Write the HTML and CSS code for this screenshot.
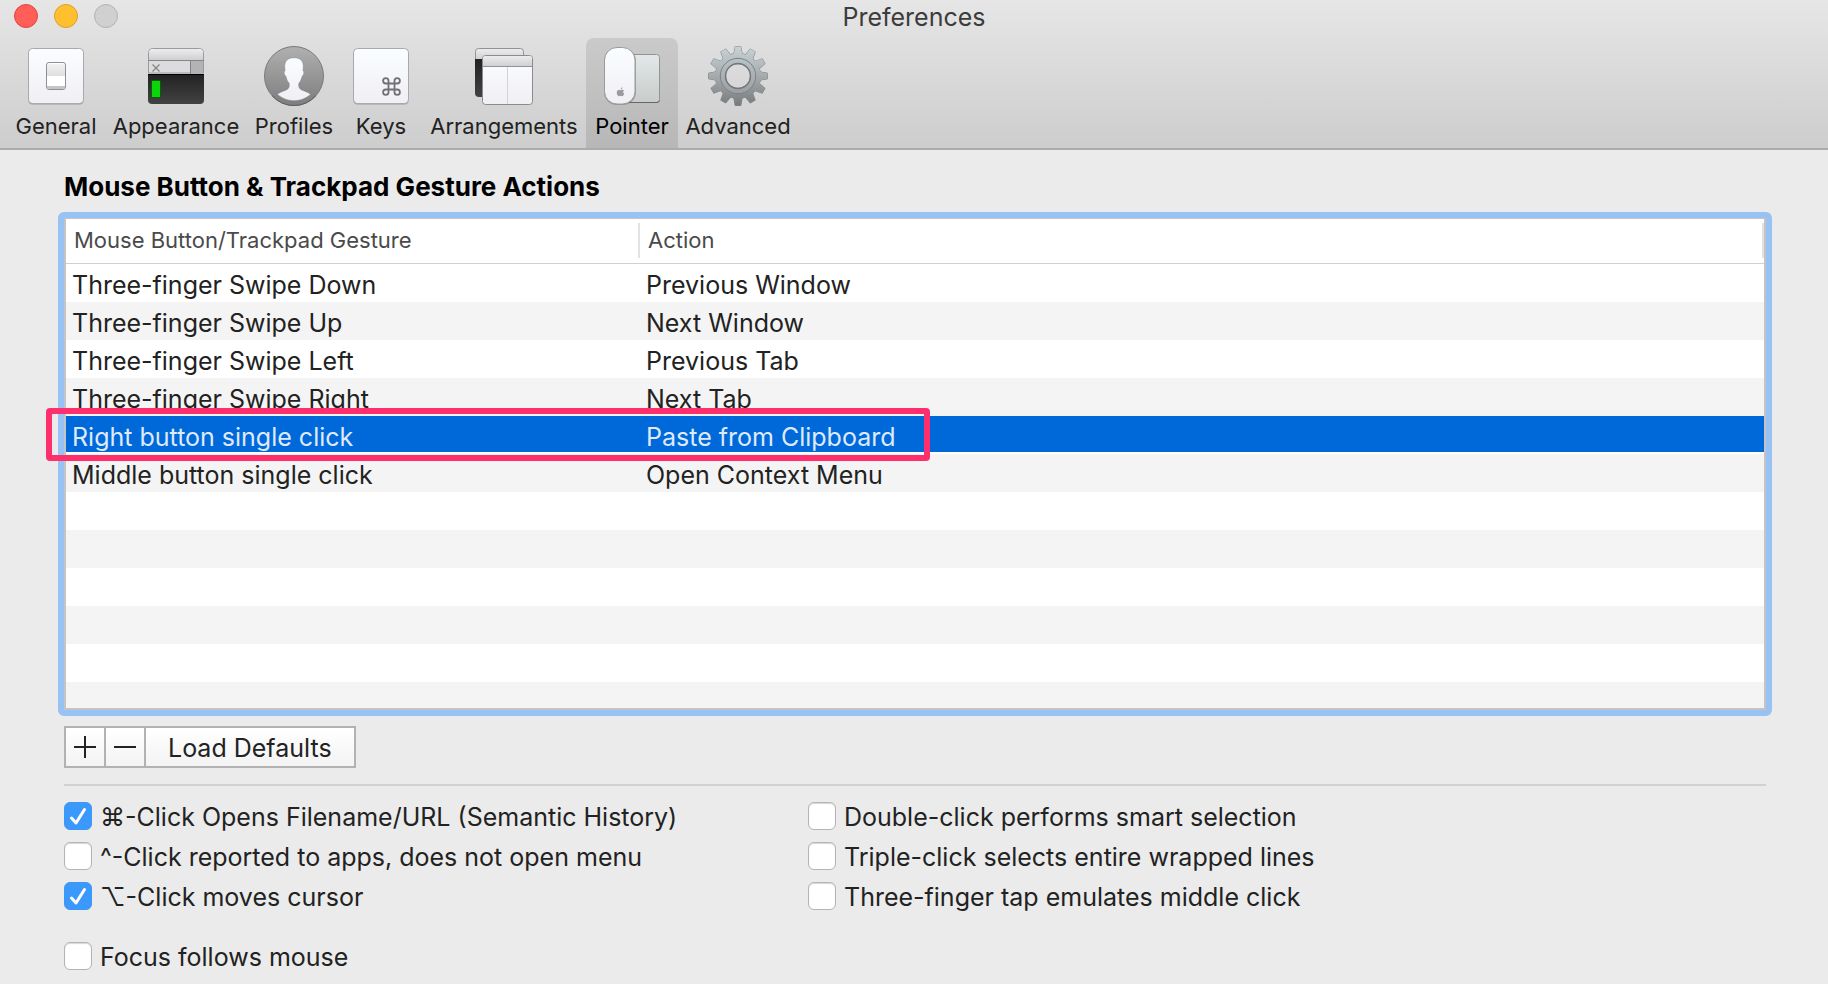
FILE: index.html
```html
<!DOCTYPE html>
<html lang="en">
<head>
<meta charset="utf-8">
<title>Preferences</title>
<link rel="stylesheet" href="styles.css">
</head>
<body>
<svg class="defs" aria-hidden="true">
  <defs>
    <linearGradient id="paper" x1="0" y1="0" x2="0" y2="1"><stop offset="0" stop-color="#fafdff"/><stop offset="1" stop-color="#f0eff4"/></linearGradient>
    <linearGradient id="bar" x1="0" y1="0" x2="0" y2="1"><stop offset="0" stop-color="#ececed"/><stop offset="1" stop-color="#cfd0d2"/></linearGradient>
    <linearGradient id="dark" x1="0" y1="0" x2="0" y2="1"><stop offset="0" stop-color="#222"/><stop offset="1" stop-color="#424242"/></linearGradient>
    <linearGradient id="disc" x1="0" y1="0" x2="0" y2="1"><stop offset="0" stop-color="#b0b0b0"/><stop offset="1" stop-color="#7d7d7f"/></linearGradient>
    <linearGradient id="pad" x1="0" y1="0" x2="0" y2="1"><stop offset="0" stop-color="#e2e9e8"/><stop offset="1" stop-color="#c8cccb"/></linearGradient>
    <linearGradient id="steel" gradientUnits="userSpaceOnUse" x1="0" y1="0" x2="0" y2="60"><stop offset="0" stop-color="#c9d3d7"/><stop offset=".5" stop-color="#a5abad"/><stop offset="1" stop-color="#777a7b"/></linearGradient>
    <linearGradient id="hub" x1="0" y1="0" x2="0" y2="1"><stop offset="0" stop-color="#b6c0c4"/><stop offset="1" stop-color="#9da1a3"/></linearGradient>
  </defs>
</svg>
<header class="toolbar">
  <div class="titlebar">
    <div class="lights">
      <button class="light light-close" aria-label="Close"></button>
      <button class="light light-minimize" aria-label="Minimize"></button>
      <button class="light light-zoom" aria-label="Zoom" disabled></button>
    </div>
    <h1 class="title">Preferences</h1>
  </div>
  <nav class="tabs">
    <button class="tab">
      <svg class="icon" viewBox="0 0 60 60" aria-hidden="true">
        <rect x="2.500" y="3" width="55" height="55.500" rx="4" fill="#858585" opacity=".7"/>
        <rect x="2.500" y="2.500" width="55" height="55" rx="4" fill="url(#paper)" stroke="#a9a9ac"/>
        <rect x="20.500" y="16.500" width="19" height="27" rx="2.500" fill="#fff" stroke="#8f9092"/>
        <path d="M21 18h18v12H21z" fill="url(#bar)" opacity=".7"/>
        <path d="M21 40h18v1.500q0 1.500-2 1.500H23q-2 0-2-1.500z" fill="#c5c5c6"/>
      </svg>
      <span>General</span>
    </button>
    <button class="tab">
      <svg class="icon" viewBox="0 0 60 60" aria-hidden="true">
        <path d="M2.500 27V6.500q0-4 4-4h47q4 0 4 4V27z" fill="#dcdcde" stroke="#9b9b9c"/>
        <path d="M3 14V6.500q0-3.500 3.500-3.500h47q3.500 0 3.500 3.500V14z" fill="url(#bar)"/>
        <path d="M44 15h13v13H44z" fill="#b3b3b5"/>
        <path d="M2 14.500h56M44.500 15v13" stroke="#858586" fill="none"/>
        <path d="M6.500 18.500l7 7m0-7l-7 7" stroke="#858588" stroke-width="1.300"/>
        <path d="M2 28h56v26q0 4-4 4H6q-4 0-4-4z" fill="url(#dark)"/>
        <path d="M2 28.500h56" stroke="#000"/>
        <rect x="5" y="34" width="10" height="18" rx="1.500" fill="#075f07"/>
        <rect x="6" y="35" width="8" height="16" fill="#0bd40b"/>
      </svg>
      <span>Appearance</span>
    </button>
    <button class="tab">
      <svg class="icon" viewBox="0 0 60 60" aria-hidden="true">
        <circle cx="30" cy="30" r="29.500" fill="url(#disc)" stroke="#7a7a7b"/>
        <path d="M8 49.500a29 29 0 0 0 44 0" fill="none" stroke="#5e5e60"/>
        <path d="M30 11.800c6-.4 9.800 3.400 9.300 9.200-.1 1.500-.2 2.600-.3 3.800 1.400.2 1 4.600-1 5.600-.6 3-1.700 5.300-3.200 6.900-.3 3.700.3 5.500 3 6.700 3.300 1.400 6.700 2.400 8.800 4.300-4.600 4-10 6.400-16.600 6.400S18 52.300 13.400 48.300c2.100-1.900 5.500-2.900 8.800-4.300 2.700-1.200 3.300-3 3-6.700-1.500-1.600-2.600-3.900-3.200-6.900-2-1-2.400-5.400-1-5.600-.1-1.200-.2-2.300-.3-3.800-.3-5.600 3.300-9.600 9.300-9.200z" fill="url(#paper)" stroke="#818183" stroke-width=".5"/>
      </svg>
      <span>Profiles</span>
    </button>
    <button class="tab">
      <svg class="icon" viewBox="0 0 60 60" aria-hidden="true">
        <rect x="2.500" y="3" width="55" height="55.500" rx="4" fill="#858585" opacity=".7"/>
        <rect x="2.500" y="2.500" width="55" height="55" rx="4" fill="url(#paper)" stroke="#a9a9ac"/>
        <path d="M37.500 37.500h6v6h-6zM37.500 37.500h-2.700a2.700 2.700 0 1 1 2.700-2.700zM43.500 37.500v-2.700a2.700 2.700 0 1 1 2.700 2.700zM43.500 43.500h2.700a2.700 2.700 0 1 1-2.700 2.700zM37.500 43.500v2.700a2.700 2.700 0 1 1-2.700-2.700z" fill="none" stroke="#717175" stroke-width="1.800"/>
      </svg>
      <span>Keys</span>
    </button>
    <button class="tab">
      <svg class="icon" viewBox="0 0 60 60" aria-hidden="true">
        <path d="M1.500 14V5.500q0-3 3-3h42q3 0 3 3V14z" fill="url(#bar)" stroke="#929293"/>
        <path d="M1 13h10v38H5q-4 0-4-4z" fill="url(#dark)"/>
        <rect x="8.500" y="9.500" width="50" height="49" rx="3" fill="url(#paper)" stroke="#8b8b8d"/>
        <path d="M9 20v-7.500q0-2.500 2.500-2.500h44q2.500 0 2.500 2.500V20z" fill="url(#bar)"/>
        <path d="M9 20.500h49" stroke="#929294"/>
        <path d="M33.500 21v37" stroke="#d3d4d8"/>
      </svg>
      <span>Arrangements</span>
    </button>
    <button class="tab tab-selected" aria-current="page">
      <svg class="icon" viewBox="0 0 60 60" aria-hidden="true">
        <rect x="22" y="8.500" width="35.500" height="48" rx="3" fill="url(#pad)" stroke="#939494"/>
        <path d="M22 56.500h33q2 0 2.500-2" fill="none" stroke="#666" />
        <rect x="2" y="2" width="32" height="57" rx="13" fill="#777" opacity=".55"/>
        <rect x="2.500" y="1.500" width="30.500" height="56.500" rx="12.500" fill="url(#paper)" stroke="#999a9c"/>
        <g transform="translate(4 9) scale(.8)">
          <path d="M18.300 43c.2-1.500 1-2.300 2.200-2.600.1 1.400-.8 2.500-2.200 2.600zM18.200 44c.8 0 1.300-.5 2.300-.5.8 0 1.500.4 2 1-1.600 1-1.400 3.300.3 4-.5 1.400-1.400 3-2.500 3-.8 0-1.100-.5-2-.5s-1.300.5-2 .5c-1.600 0-3.300-3.500-2.700-5.700.5-2 2.200-2.600 4.600-1.800z" fill="#9b9b9e"/>
        </g>
      </svg>
      <span>Pointer</span>
    </button>
    <button class="tab">
      <svg class="icon" viewBox="0 0 60 60" aria-hidden="true">
        <defs>
          <path id="tooth" d="M25.500 10L27.200.500h5.600L34.500 10z"/>
          <clipPath id="teeth">
            <use href="#tooth"/><use href="#tooth" transform="rotate(30 30 30)"/><use href="#tooth" transform="rotate(60 30 30)"/><use href="#tooth" transform="rotate(90 30 30)"/><use href="#tooth" transform="rotate(120 30 30)"/><use href="#tooth" transform="rotate(150 30 30)"/><use href="#tooth" transform="rotate(180 30 30)"/><use href="#tooth" transform="rotate(210 30 30)"/><use href="#tooth" transform="rotate(240 30 30)"/><use href="#tooth" transform="rotate(270 30 30)"/><use href="#tooth" transform="rotate(300 30 30)"/><use href="#tooth" transform="rotate(330 30 30)"/>
          </clipPath>
        </defs>
        <g fill="none" stroke="#7f8588" stroke-width="1">
          <use href="#tooth"/><use href="#tooth" transform="rotate(30 30 30)"/><use href="#tooth" transform="rotate(60 30 30)"/><use href="#tooth" transform="rotate(90 30 30)"/><use href="#tooth" transform="rotate(120 30 30)"/><use href="#tooth" transform="rotate(150 30 30)"/><use href="#tooth" transform="rotate(180 30 30)"/><use href="#tooth" transform="rotate(210 30 30)"/><use href="#tooth" transform="rotate(240 30 30)"/><use href="#tooth" transform="rotate(270 30 30)"/><use href="#tooth" transform="rotate(300 30 30)"/><use href="#tooth" transform="rotate(330 30 30)"/>
        </g>
        <circle cx="30" cy="30" r="17.500" fill="none" stroke="#7f8588" stroke-width="11.300"/>
        <rect width="60" height="60" fill="url(#steel)" clip-path="url(#teeth)"/>
        <circle cx="30" cy="30" r="17.500" fill="none" stroke="url(#steel)" stroke-width="10.500"/>
        <circle cx="30" cy="30" r="15.200" fill="none" stroke="url(#hub)" stroke-width="5"/>
        <circle cx="30" cy="30" r="17.700" fill="none" stroke="#7b8286"/>
        <circle cx="30" cy="30" r="12.500" fill="none" stroke="#72777a" stroke-width="1.400"/>
      </svg>
      <span>Advanced</span>
    </button>
  </nav>
</header>
<main class="pane">
  <h2 class="heading">Mouse Button &amp; Trackpad Gesture Actions</h2>
  <section class="list">
    <div class="list-view">
      <table class="actions">
        <thead>
          <tr><th scope="col"><span class="head">Mouse Button/Trackpad Gesture</span></th><th scope="col"><span class="head">Action</span></th></tr>
        </thead>
        <tbody>
          <tr><td>Three-finger Swipe Down</td><td>Previous Window</td></tr>
          <tr><td>Three-finger Swipe Up</td><td>Next Window</td></tr>
          <tr><td>Three-finger Swipe Left</td><td>Previous Tab</td></tr>
          <tr><td>Three-finger Swipe Right</td><td>Next Tab</td></tr>
          <tr class="row-selected"><td>Right button single click</td><td>Paste from Clipboard</td></tr>
          <tr><td>Middle button single click</td><td>Open Context Menu</td></tr>
        </tbody>
      </table>
      <div class="stripes"></div>
    </div>
    <div class="callout"></div>
  </section>
  <div class="controls">
    <button class="control control-icon" aria-label="Add"><svg class="glyph" viewBox="0 0 22 22" aria-hidden="true"><path d="M0 11h22M11 0v22"/></svg></button>
    <button class="control control-icon" aria-label="Remove"><svg class="glyph" viewBox="0 0 22 22" aria-hidden="true"><path d="M0 11h22"/></svg></button>
    <button class="control control-text">Load Defaults</button>
  </div>
  <hr class="rule">
  <div class="options">
    <div class="column">
      <label class="option"><input type="checkbox" class="check" checked><span>⌘-Click Opens Filename/URL (Semantic History)</span></label>
      <label class="option"><input type="checkbox" class="check"><span>^-Click reported to apps, does not open menu</span></label>
      <label class="option"><input type="checkbox" class="check" checked><span>⌥-Click moves cursor</span></label>
      <label class="option option-apart"><input type="checkbox" class="check"><span>Focus follows mouse</span></label>
    </div>
    <div class="column">
      <label class="option"><input type="checkbox" class="check"><span>Double-click performs smart selection</span></label>
      <label class="option"><input type="checkbox" class="check"><span>Triple-click selects entire wrapped lines</span></label>
      <label class="option"><input type="checkbox" class="check"><span>Three-finger tap emulates middle click</span></label>
    </div>
  </div>
</main>
</body>
</html>
```
FILE: styles.css
```css
* { box-sizing: border-box; }

body {
  margin: 0;
  height: 100vh;
  display: flex;
  flex-direction: column;
  background: #ebebeb;
  color: #222;
  font-family: Inter, "Liberation Sans", sans-serif;
  font-size: 25px;
  line-height: 28px;
}

button {
  margin: 0;
  padding: 0;
  border: 0;
  background: none;
  color: inherit;
  font: inherit;
}

.defs { position: absolute; width: 0; height: 0; }

.toolbar {
  border-bottom: 2px solid #ababab;
  background: linear-gradient(#e6e6e6, #cdcdcd);
}

.titlebar {
  display: grid;
  grid-template-columns: 1fr auto 1fr;
  align-items: center;
  height: 38px;
  padding: 0 14px 6px;
}

.lights { display: flex; gap: 16px; }

.light {
  width: 24px;
  height: 24px;
  border: 1px solid #e2433f;
  border-radius: 50%;
  background: #ff5f58;
}

.light-minimize { border-color: #dfa023; background: #ffbf2f; }
.light-zoom { border-color: #b3b3b3; background: #d0d0d0; }

.title {
  margin: 0;
  padding-top: 2px;
  color: #3c3c3c;
  font-size: 25px;
  font-weight: 400;
}

.tabs {
  display: grid;
  grid-template-columns: 96px 144px 92px 82px 164px 92px 120px;
  height: 110px;
  padding-left: 8px;
}

.tab {
  display: flex;
  flex-direction: column;
  align-items: center;
  padding-top: 8px;
  border-radius: 8px 8px 0 0;
  font-size: 22px;
  line-height: 40px;
}

.tab-selected { background: linear-gradient(#cacaca, #b7b7b7); color: #000; }

.icon { flex: none; width: 60px; height: 60px; }

.pane {
  flex: 1;
  min-height: 0;
  display: flex;
  flex-direction: column;
  padding: 22px 62px 14px 64px;
}

.heading {
  margin: 0 0 10px;
  color: #000;
  font-size: 26px;
  font-weight: 700;
  line-height: 30px;
}

.list {
  position: relative;
  flex: 1;
  min-height: 0;
  display: flex;
  margin: 0 -6px 10px;
  border: 6px solid #98c1f4;
  border-radius: 6px;
}

.list-view {
  flex: 1;
  display: flex;
  flex-direction: column;
  overflow: hidden;
  border: 2px solid #c4c4c4;
  border-top-width: 1px;
  background: #fff;
}

.actions {
  width: 100%;
  table-layout: fixed;
  border-spacing: 0;
}

th, td { text-align: left; white-space: nowrap; }

th:first-child { width: 574px; }

th {
  height: 45px;
  padding: 0 0 2px;
  border-bottom: 1px solid #d0d0d0;
  color: #4a4a4a;
  font-size: 22px;
  font-weight: 400;
}

.head {
  display: block;
  padding-left: 8px;
  border-right: 2px solid #e2e2e2;
  line-height: 35px;
}

td { height: 38px; padding: 3px 6px 0; }

tbody tr:nth-child(even) { background: #f4f4f4; }

.actions .row-selected {
  background: linear-gradient(#0069d9 36px, #fff 36px);
  color: #dfe9fb;
}

.stripes {
  flex: 1;
  background: repeating-linear-gradient(#fff 0 38px, #f4f4f4 38px 76px);
}

.callout {
  position: absolute;
  top: 190px;
  left: -18px;
  width: 884px;
  height: 53px;
  border: 6px solid #ff2e6d;
  border-radius: 4px;
}

.controls { display: flex; }

.control {
  display: flex;
  align-items: center;
  justify-content: center;
  height: 42px;
  border: 2px solid #b2b2b2;
  background: linear-gradient(#fff, #f3f3f3);
}

.control-icon { width: 42px; margin-right: -2px; }
.control-text { padding: 2px 22px 0; }

.glyph { width: 22px; height: 22px; stroke: #222; stroke-width: 2; }

.rule {
  width: 100%;
  height: 2px;
  margin: 16px 0;
  border: 0;
  background: #d2d2d2;
}

.options { display: grid; grid-template-columns: 744px 1fr; }

.column { display: flex; flex-direction: column; gap: 12px; }

.option { display: flex; align-items: center; gap: 8px; height: 28px; }
.option span { padding-top: 2px; }
.option-apart { margin-top: 20px; }

.check {
  flex: none;
  width: 28px;
  height: 28px;
  margin: 0;
  appearance: none;
  border: 1px solid #b4b4b4;
  border-radius: 6px;
  background: #fff;
  box-shadow: inset 0 1px 1px #d8d8d8;
}

.check:checked {
  border-color: #3b97fb;
  background: #3b99fc url("data:image/svg+xml,%3Csvg xmlns='http://www.w3.org/2000/svg' viewBox='0 0 26 26'%3E%3Cpath d='M6.500 15l4.500 5L19.500 6.500' fill='none' stroke='white' stroke-width='3' stroke-linecap='round' stroke-linejoin='round'/%3E%3C/svg%3E");
  box-shadow: none;
}
```
